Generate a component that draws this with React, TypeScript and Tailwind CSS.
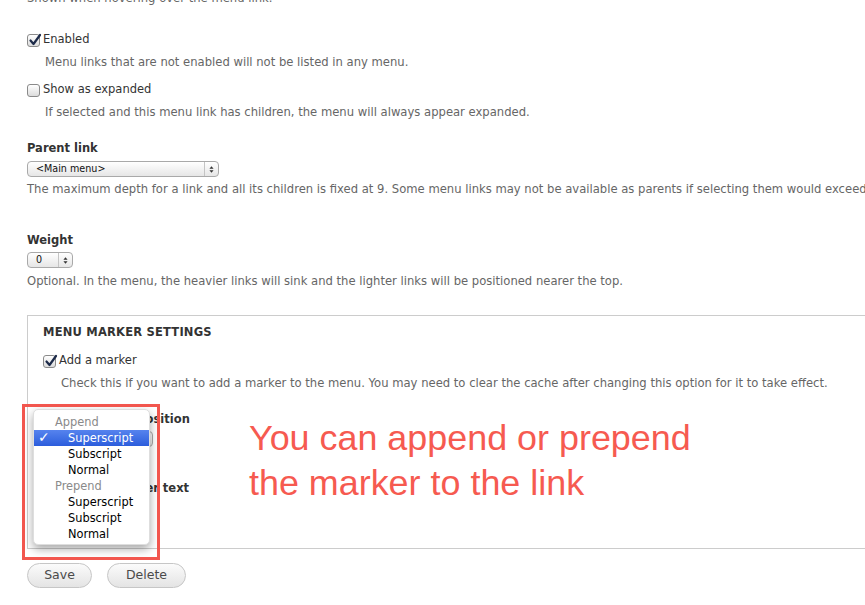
const menuOptions = [
  { group: "Append", items: ["Superscript", "Subscript", "Normal"] },
  { group: "Prepend", items: ["Superscript", "Subscript", "Normal"] },
];

function Checkbox({ checked }: { checked?: boolean }) {
  return (
    <span className="relative inline-block w-[13px] h-[13px] rounded-[3px] border border-[#8a8a8a] bg-gradient-to-b from-[#ffffff] to-[#dcdcdc] shrink-0">
      {checked && (
        <svg viewBox="0 0 14 14" className="absolute left-[0px] top-[-2px] w-[14px] h-[14px]">
          <path d="M2.5 7.5 L5.5 11 L12 2" fill="none" stroke="#1d2b4a" strokeWidth="2.2" strokeLinecap="round" strokeLinejoin="round" />
        </svg>
      )}
    </span>
  );
}

function SelectBox({ value, width, arrowAt }: { value: string; width: string; arrowAt: string }) {
  return (
    <div className={`flex items-center h-[16px] rounded-[4px] border border-[#a9a9a9] bg-gradient-to-b from-[#ffffff] to-[#e6e6e6] text-[9.6px] text-[#111] ${width}`}>
      <span className={`pl-[8px] ${arrowAt}`}>{value}</span>
      <span className="flex items-center justify-center h-full flex-1 border-l border-[#c4c4c4]">
        <svg viewBox="0 0 6 10" className="w-[5px] h-[9px]">
          <path d="M0.5 4 L3 1 L5.5 4 Z M0.5 6 L3 9 L5.5 6 Z" fill="#333" />
        </svg>
      </span>
    </div>
  );
}

export default function App() {
  return (
    <div className="relative w-[865px] h-[605px] overflow-hidden bg-white font-['DejaVu_Sans',sans-serif] text-[#333]">
      <div className="pl-[27px]">
        <p className="-mt-[10px] h-[16px] leading-[16px] text-[11.6px] text-[#666] whitespace-nowrap">
          Shown when hovering over the menu link.
        </p>

        <label className="mt-[26px] flex items-center gap-[3px] h-[16px] text-[11.5px]">
          <Checkbox checked />
          Enabled
        </label>
        <p className="mt-[6px] pl-[18px] h-[16px] leading-[16px] text-[11.6px] text-[#666] whitespace-nowrap">
          Menu links that are not enabled will not be listed in any menu.
        </p>

        <label className="mt-[12px] flex items-center gap-[3px] h-[16px] text-[11.5px]">
          <Checkbox />
          Show as expanded
        </label>
        <p className="mt-[6px] pl-[18px] h-[16px] leading-[16px] text-[11.6px] text-[#666] whitespace-nowrap">
          If selected and this menu link has children, the menu will always appear expanded.
        </p>

        <p className="mt-[20px] h-[16px] leading-[16px] text-[11.5px] font-bold">Parent link</p>
        <div className="mt-[5px]">
          <SelectBox value="<Main menu>" width="w-[192px]" arrowAt="w-[176px]" />
        </div>
        <p className="mt-[4px] h-[16px] leading-[16px] text-[11.6px] text-[#666] whitespace-nowrap">
          The maximum depth for a link and all its children is fixed at 9. Some menu links may not be available as parents if selecting them would exceed this limit.
        </p>

        <p className="mt-[35px] h-[16px] leading-[16px] text-[11.5px] font-bold">Weight</p>
        <div className="mt-[4px]">
          <SelectBox value="0" width="w-[46px]" arrowAt="w-[30px]" />
        </div>
        <p className="mt-[5px] h-[16px] leading-[16px] text-[11.6px] text-[#666] whitespace-nowrap">
          Optional. In the menu, the heavier links will sink and the lighter links will be positioned nearer the top.
        </p>

        {/* Fieldset */}
        <div className="mt-[26px] w-[900px] h-[234px] border border-[#cccccc] pl-[15px] pt-[8px]">
          <p className="h-[16px] leading-[16px] text-[11.5px] font-bold uppercase tracking-[0.2px]">Menu marker settings</p>
          <label className="mt-[13px] flex items-center gap-[3px] h-[16px] text-[11.5px]">
            <Checkbox checked />
            Add a marker
          </label>
          <p className="mt-[6px] pl-[18px] h-[16px] leading-[16px] text-[11.6px] text-[#666] whitespace-nowrap">
            Check this if you want to add a marker to the menu. You may need to clear the cache after changing this option for it to take effect.
          </p>
          <p className="mt-[20px] h-[16px] leading-[16px] text-[11.5px] font-bold">Select marker position</p>
          <div className="mt-[4px]">
            <SelectBox value="Superscript" width="w-[110px]" arrowAt="w-[94px]" />
          </div>
          <p className="mt-[33px] h-[16px] leading-[16px] text-[11.5px] font-bold">Select the marker text</p>
          <div className="mt-[4px]">
            <SelectBox value="None" width="w-[60px]" arrowAt="w-[44px]" />
          </div>
        </div>

        <div className="mt-[14px] flex gap-[15px]">
          <button className="w-[65px] h-[25px] rounded-full border border-[#c6c6c6] bg-gradient-to-b from-[#fbfbfb] to-[#e4e4e4] text-[12.5px] text-[#4a4a4a]">
            Save
          </button>
          <button className="w-[79px] h-[25px] rounded-full border border-[#c6c6c6] bg-gradient-to-b from-[#fbfbfb] to-[#e4e4e4] text-[12.5px] text-[#4a4a4a]">
            Delete
          </button>
        </div>
      </div>

      {/* Open dropdown */}
      <div className="absolute left-[33px] top-[409px] w-[117px] h-[136px] py-[4px] rounded-[5px] bg-white border border-[#dedede] shadow-[0_4px_10px_rgba(0,0,0,0.35)] text-[11.4px]">
        {menuOptions.map((g, gi) => (
          <div key={gi}>
            <div className="h-[16px] leading-[16px] pl-[21px] text-[#8a8a8a]">{g.group}</div>
            {g.items.map((item, i) => {
              const active = gi === 0 && i === 0;
              return (
                <div
                  key={i}
                  className={`relative h-[16px] leading-[16px] pl-[34px] ${active ? "bg-gradient-to-b from-[#5683ee] to-[#2c5ddc] text-white" : "text-black"}`}
                >
                  {active && <span className="absolute left-[4px] top-[-1px] text-[14px] font-bold italic">✓</span>}
                  {item}
                </div>
              );
            })}
          </div>
        ))}
      </div>

      {/* Annotation */}
      <div className="absolute left-[22px] top-[404px] w-[138px] h-[156px] border-[3px] border-[#f2564e]" />
      <div className="absolute left-[249px] top-[416px] font-['Liberation_Sans',sans-serif] text-[35.9px] leading-[45px] text-[#f65a50]">
        <p>You can append or prepend</p>
        <p>the marker to the link</p>
      </div>
    </div>
  );
}
